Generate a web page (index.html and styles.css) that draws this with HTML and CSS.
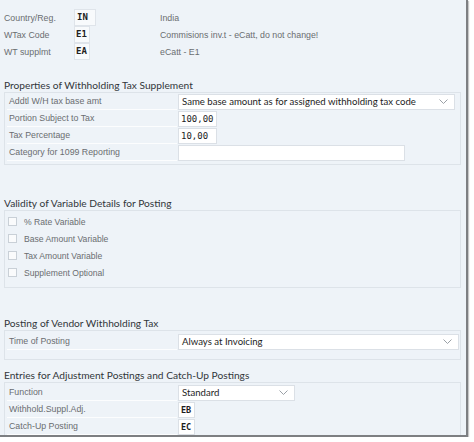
FILE: index.html
```html
<!DOCTYPE html>
<html lang="en">
<head>
    <meta charset="UTF-8">
    <title>Withholding Tax Supplement</title>
    <link rel="stylesheet" href="styles.css">
</head>
<body>
    <div class="screen">
        <div class="head-fields">
            <div class="hrow">
                <span class="hlabel">Country/Reg.</span>
                <span class="hcell"><span class="code code-wide">IN</span></span>
                <span class="desc">India</span>
            </div>
            <div class="hrow">
                <span class="hlabel">WTax Code</span>
                <span class="hcell"><span class="code">E1</span></span>
                <span class="desc">Commisions inv.t - eCatt, do not change!</span>
            </div>
            <div class="hrow">
                <span class="hlabel">WT supplmt</span>
                <span class="hcell"><span class="code">EA</span></span>
                <span class="desc">eCatt - E1</span>
            </div>
        </div>

        <h2 class="group-title first">Properties of Withholding Tax Supplement</h2>
        <div class="group">
            <div class="row">
                <div class="label">Addtl W/H tax base amt</div>
                <div class="select select-long">
                    <span>Same base amount as for assigned withholding tax code</span>
                    <svg class="chevron" width="9" height="5" viewBox="0 0 9 5"><polyline points="0.5,0.5 4.5,4.5 8.5,0.5" fill="none" stroke="#9aa0a6" stroke-width="1"/></svg>
                </div>
            </div>
            <div class="row">
                <div class="label">Portion Subject to Tax</div>
                <div class="input input-num">100,00</div>
            </div>
            <div class="row">
                <div class="label">Tax Percentage</div>
                <div class="input input-num">10,00</div>
            </div>
            <div class="row">
                <div class="label">Category for 1099 Reporting</div>
                <div class="input input-text"></div>
            </div>
        </div>

        <h2 class="group-title second">Validity of Variable Details for Posting</h2>
        <div class="group checks">
            <label class="check"><span class="box"></span>% Rate Variable</label>
            <label class="check"><span class="box"></span>Base Amount Variable</label>
            <label class="check"><span class="box"></span>Tax Amount Variable</label>
            <label class="check"><span class="box"></span>Supplement Optional</label>
        </div>

        <h2 class="group-title third">Posting of Vendor Withholding Tax</h2>
        <div class="group single">
            <div class="row">
                <div class="label">Time of Posting</div>
                <div class="select select-full">
                    <span>Always at Invoicing</span>
                    <svg class="chevron" width="9" height="5" viewBox="0 0 9 5"><polyline points="0.5,0.5 4.5,4.5 8.5,0.5" fill="none" stroke="#9aa0a6" stroke-width="1"/></svg>
                </div>
            </div>
        </div>

        <h2 class="group-title fourth">Entries for Adjustment Postings and Catch-Up Postings</h2>
        <div class="group last">
            <div class="row">
                <div class="label">Function</div>
                <div class="select select-short">
                    <span>Standard</span>
                    <svg class="chevron" width="9" height="5" viewBox="0 0 9 5"><polyline points="0.5,0.5 4.5,4.5 8.5,0.5" fill="none" stroke="#9aa0a6" stroke-width="1"/></svg>
                </div>
            </div>
            <div class="row">
                <div class="label">Withhold.Suppl.Adj.</div>
                <div class="input input-code">EB</div>
            </div>
            <div class="row">
                <div class="label">Catch-Up Posting</div>
                <div class="input input-code">EC</div>
            </div>
        </div>
    </div>
</body>
</html>
```

FILE: styles.css
```css
body {
    margin: 0;
    background: #ffffff;
    font-family: "Liberation Sans", Arial, sans-serif;
}
.screen {
    box-sizing: border-box;
    width: 468px;
    height: 437px;
    padding-top: 9px;
    background: #eef3f8;
    border-right: 2px solid #7d7f82;
    border-bottom: 2px solid #7d7f82;
    box-shadow: 1px 1px 1px #c8c8c8;
    overflow: hidden;
}

/* kopfdaten oben */
.hrow {
    display: flex;
    align-items: center;
    height: 17px;
    font-size: 8.8px;
}
.hlabel {
    width: 70px;
    padding-left: 4px;
    color: #6a6d70;
}
.hcell {
    width: 86px;
}
.code {
    display: inline-block;
    width: 13px;
    height: 15px;
    line-height: 15px;
    padding-left: 1px;
    background: #f8fafc;
    border: 1px solid #dfe4ea;
    font-family: "DejaVu Sans Mono", monospace;
    font-size: 9px;
    font-weight: bold;
    color: #222;
}
.code-wide {
    width: 18px;
    padding-left: 2px;
}
.desc {
    color: #6a6d70;
}

/* gruppen */
.group-title {
    margin: 0 0 0 4px;
    height: 14px;
    line-height: 14px;
    font-family: Lato, "Open Sans", sans-serif;
    font-size: 10.2px;
    font-weight: normal;
    color: #32363a;
}
.group-title.first { margin-top: 18px; }
.group-title.second { margin-top: 31px; }
.group-title.third { margin-top: 28px; }
.group-title.fourth { margin-top: 8px; }

.group {
    margin: 0 5px 0 4px;
    padding: 0 0 3px 2px;
    border: 1px solid #dde3e9;
}
.group.single {
    padding-top: 2px;
    padding-bottom: 9px;
}
.group.last {
    padding-top: 1px;
    padding-bottom: 4px;
}
.row {
    display: flex;
    align-items: center;
    height: 17px;
}
.label {
    box-sizing: border-box;
    width: 170px;
    height: 17px;
    line-height: 16px;
    padding-left: 2px;
    border-bottom: 1px solid #fcfdfe;
    font-size: 8.8px;
    color: #6a6d70;
}
.input, .select {
    box-sizing: border-box;
    height: 16px;
    margin-left: 1px;
    background: #ffffff;
    border: 1px solid #dbe0e6;
    color: #1d1d1d;
}
.input {
    line-height: 14px;
    padding-left: 2px;
    font-family: "DejaVu Sans Mono", monospace;
    font-size: 9px;
}
.input-num { width: 39px; }
.input-text { width: 227px; }
.input-code {
    width: 17px;
    font-weight: bold;
    font-size: 8.5px;
}
.select {
    display: flex;
    align-items: center;
    justify-content: space-between;
    padding: 0 6px 0 3px;
    font-family: Lato, "Open Sans", sans-serif;
    font-size: 9.6px;
}
.select-long { width: 277px; }
.select-full { width: 281px; }
.select-short { width: 117px; }
.chevron {
    flex: none;
}

/* ankreuzfelder */
.checks {
    padding: 2px 0 6px 3px;
}
.check {
    display: flex;
    align-items: center;
    height: 17px;
    font-size: 8.6px;
    color: #6a6d70;
}
.box {
    box-sizing: border-box;
    width: 9px;
    height: 9px;
    margin-right: 7px;
    background: #fafbfc;
    border: 1px solid #c9d0d7;
}
```
